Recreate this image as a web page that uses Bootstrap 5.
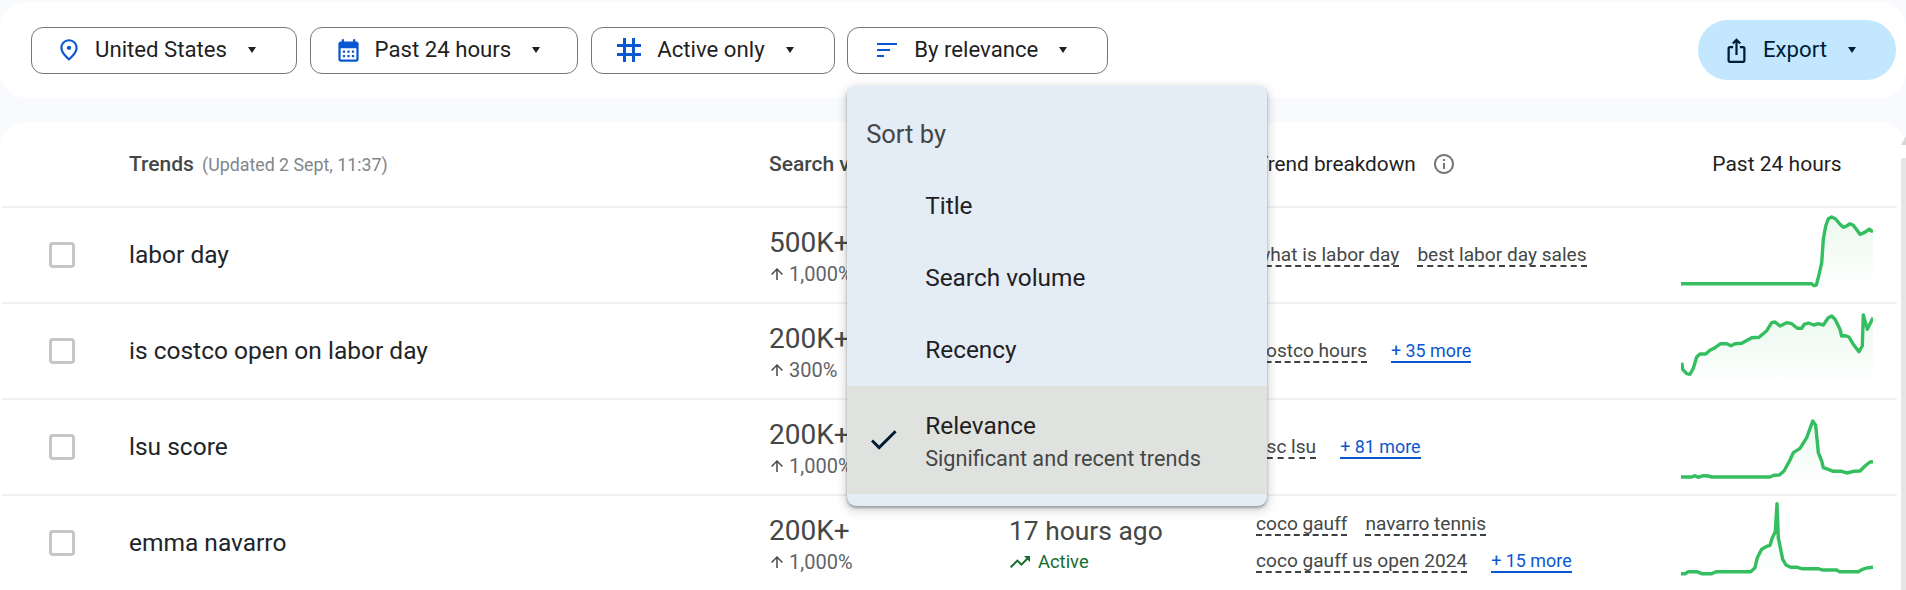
<!DOCTYPE html>
<html lang="en">
<head>
    <meta charset="UTF-8">
    <meta name="viewport" content="width=device-width, initial-scale=1.0">
    <title>Trending now</title>
    <link href="https://cdn.jsdelivr.net/npm/bootstrap@5.3.0/dist/css/bootstrap.min.css" rel="stylesheet">
    <style>
        body { background: #f8fafd; font-family: Roboto, "Liberation Sans", sans-serif; overflow: hidden; height: 590px; padding-top: 2px; color: #444746; }
        .filter-panel { background: #fff; height: 96px; border-radius: 26px; padding: 0 10px 0 31px; gap: 12.5px; margin-bottom: 24px; }
        .chip { height: 47px; border: 1px solid #747775; border-radius: 12px; background: #fff; color: #1f1f1f; font-size: 22.2px; font-weight: 400; padding: 0 40px 0 24px; gap: 13px; }
        .chip:hover, .chip:active, .chip.show { background: #fff !important; color: #1f1f1f !important; border-color: #747775 !important; }
        .chip::after { border-top: 6px solid; border-left: 4px solid transparent; border-right: 4px solid transparent; border-bottom: 0; margin-left: 8px; vertical-align: middle; }
        .chip svg { fill: #0b57d0; flex: none; }
        .chip-date { padding-right: 37px; }
        .ico-hash { margin: 0 -3px 0 -4.5px; }
        .ico-sort { margin: 0 4px 0 5px; }
        .chip-export, .chip-export:hover, .chip-export:active { height: 60px; border: 0; border-radius: 30px; background: #c2e7ff !important; color: #001d35 !important; padding: 0 40px 0 25px; }
        .chip-export svg { fill: #001d35; }
        .sort-menu { background: #e4ecf6; width: 420px; border: 0; border-radius: 9px; padding: 12px 0; margin: 0; top: 59px; left: 0; box-shadow: 0 2px 3px rgba(60,64,67,.45), 0 3px 9px 3px rgba(60,64,67,.16); }
        .sort-menu .dropdown-header { height: 72px; padding: 2px 0 0 19px; display: flex; align-items: center; font-size: 25.5px; font-weight: 400; color: #444746; }
        .sort-menu .dropdown-item { height: 72px; padding: 2px 0 0 78px; display: flex; flex-direction: column; justify-content: center; font-size: 24.4px; color: #1f1f1f; position: relative; }
        .sort-menu .dropdown-item.sort-active { height: 108px; background: #e0e2df; color: #1f1f1f; }
        .sort-menu .sort-sub { font-size: 21.7px; color: #444746; margin-top: 0; line-height: 28px; }
        .sort-menu .sort-tick { position: absolute; left: 19px; top: 36px; fill: #001d35; }
        .trends-panel { background: #fff; border-radius: 26px 26px 0 0; padding: 0 9px 0 2px; position: relative; height: 468px; }
        .trends-table { table-layout: fixed; width: 1895px; margin: 0; }
        .trends-table > :not(caption) > * > * { padding: 0; border-bottom: 2px solid #f0f1f1; vertical-align: middle; background: transparent; color: inherit; box-shadow: none; }
        .trends-table thead th { height: 85px; padding-top: 2px; font-size: 21px; font-weight: 500; color: #444746; white-space: nowrap; }
        .trends-table thead th.head-plain { font-weight: 400; color: #1f1f1f; font-size: 20.8px; }
        .trends-table thead th .head-range { font-size: 21px; width: 192px; }
        .trends-table tbody td { height: 96px; }
        .trends-table tbody td.vol-cell { padding-top: 2px; }
        .updated { font-size: 17.8px; font-weight: 400; color: #80868b; margin-left: 3px; }
        .info-ico { fill: #757575; margin-left: 11px; vertical-align: -5px; }
        .row-check { width: 26px; height: 26px; margin: 0 0 0 47px; border: 3px solid #c4c7c5; border-radius: 3px; float: none; display: block; }
        .trend-title { font-size: 24.5px; color: #444746; }
        .vol-num, .age-num { font-size: 28px; line-height: 34px; color: #444746; }
        .age-num { font-size: 26.4px; }
        .vol-sub { font-size: 20px; color: #5f6368; line-height: 26px; margin-top: 1px; display: flex; align-items: center; gap: 3px; }
        .vol-sub svg { fill: #444746; margin-left: -1px; }
        .age-sub { font-size: 18.4px; color: #146c2e; line-height: 26px; margin-top: 1px; display: flex; align-items: center; gap: 6px; }
        .age-sub svg { fill: #146c2e; margin-left: -1px; }
        .terms { column-gap: 18px; row-gap: 14px; font-size: 19.1px; line-height: 21px; }
        .term { color: #444746; border-bottom: 2px dashed #3c4043; white-space: nowrap; }
        .term-more { color: #0b57d0; border-bottom: 2px solid #0b57d0; margin-left: 6px; font-size: 17.9px; white-space: nowrap; text-decoration: none; }
        .spark { display: block; width: 192px; height: 94px; }
        .spark polyline { fill: none; stroke: #35be5f; stroke-width: 3.4; stroke-linejoin: round; stroke-linecap: butt; }
        .scroll-arrow { position: absolute; right: 0; top: 14px; width: 0; height: 0; border-left: 5px solid transparent; border-bottom: 9px solid #d8d8d8; }
        .scroll-track { position: absolute; right: 0; top: 36px; bottom: 0; width: 5px; background: #e6e6e6; }
    </style>
</head>
<body>
    <div class="filter-panel d-flex align-items-center">
        <button type="button" class="btn chip dropdown-toggle d-inline-flex align-items-center">
            <svg width="26" height="26" viewBox="0 0 24 24"><path d="M12 12c-1.1 0-2-.9-2-2s.9-2 2-2 2 .9 2 2-.9 2-2 2zm6-1.8C18 6.57 15.35 4 12 4s-6 2.57-6 6.2c0 2.34 1.95 5.44 6 9.14 4.05-3.7 6-6.8 6-9.14zM12 2c4.2 0 8 3.22 8 8.2 0 3.32-2.67 7.25-8 11.8-5.33-4.55-8-8.48-8-11.8C4 5.22 7.8 2 12 2z"/></svg>
            United States
        </button>
        <button type="button" class="btn chip chip-date dropdown-toggle d-inline-flex align-items-center">
            <svg width="27" height="27" viewBox="0 0 24 24"><path d="M19 4h-1V2h-2v2H8V2H6v2H5c-1.1 0-2 .9-2 2v14c0 1.1.9 2 2 2h14c1.1 0 2-.9 2-2V6c0-1.1-.9-2-2-2zm0 16H5V10h14v10zM9 14H7v-2h2v2zm4 0h-2v-2h2v2zm4 0h-2v-2h2v2zm-8 4H7v-2h2v2zm4 0h-2v-2h2v2zm4 0h-2v-2h2v2z"/></svg>
            Past 24 hours
        </button>
        <button type="button" class="btn chip dropdown-toggle d-inline-flex align-items-center">
            <svg class="ico-hash" width="36" height="36" viewBox="0 0 24 24"><path d="M20 10V8h-4V4h-2v4h-4V4H8v4H4v2h4v4H4v2h4v4h2v-4h4v4h2v-4h4v-2h-4v-4h4zm-6 4h-4v-4h4v4z"/></svg>
            Active only
        </button>
        <div class="dropdown">
            <button type="button" class="btn chip dropdown-toggle d-inline-flex align-items-center show">
                <svg class="ico-sort" width="20" height="14" viewBox="0 0 20 14"><rect width="20" height="2"/><rect y="6" width="13" height="2"/><rect y="12" width="7" height="2"/></svg>
                By relevance
            </button>
            <div class="dropdown-menu show sort-menu">
                <div class="dropdown-header">Sort by</div>
                <a class="dropdown-item" href="#">Title</a>
                <a class="dropdown-item" href="#">Search volume</a>
                <a class="dropdown-item" href="#">Recency</a>
                <a class="dropdown-item sort-active" href="#">
                    <svg class="sort-tick" width="35" height="35" viewBox="0 0 24 24"><path d="M9 16.17 4.83 12l-1.42 1.41L9 19 21 7l-1.41-1.41z"/></svg>
                    <span>Relevance</span>
                    <span class="sort-sub">Significant and recent trends</span>
                </a>
            </div>
        </div>
        <button type="button" class="btn chip chip-export dropdown-toggle d-inline-flex align-items-center ms-auto">
            <svg width="27" height="27" viewBox="0 0 24 24"><path d="M16 5l-1.42 1.42-1.59-1.59V16h-1.98V4.83L9.42 6.42 8 5l4-4 4 4zm4 5v11c0 1.1-.9 2-2 2H6c-1.11 0-2-.9-2-2V10c0-1.11.89-2 2-2h3v2H6v11h12V10h-3V8h3c1.1 0 2 .89 2 2z"/></svg>
            Export
        </button>
    </div>

    <div class="trends-panel">
        <table class="table trends-table">
            <colgroup>
                <col style="width:127px"><col style="width:640px"><col style="width:240px"><col style="width:247px"><col style="width:425px"><col style="width:216px">
            </colgroup>
            <thead>
                <tr>
                    <th></th>
                    <th>Trends <span class="updated">(Updated 2 Sept, 11:37)</span></th>
                    <th>Search volume</th>
                    <th></th>
                    <th class="head-plain">Trend breakdown
                        <svg class="info-ico" width="24" height="24" viewBox="0 0 24 24"><path d="M11 7h2v2h-2zm0 4h2v6h-2zm1-9C6.48 2 2 6.48 2 12s4.48 10 10 10 10-4.48 10-10S17.52 2 12 2zm0 18c-4.41 0-8-3.59-8-8s3.59-8 8-8 8 3.59 8 8-3.59 8-8 8z"/></svg>
                    </th>
                    <th class="head-plain"><div class="head-range text-center">Past 24 hours</div></th>
                </tr>
            </thead>
            <tbody>
                <tr>
                    <td><input class="form-check-input row-check" type="checkbox" aria-label="Select"></td>
                    <td class="trend-title">labor day</td>
                    <td class="vol-cell">
                        <div class="vol-num">500K+</div>
                        <div class="vol-sub"><svg width="18" height="18" viewBox="0 0 24 24"><path d="M4 12l1.41 1.41L11 7.83V20h2V7.83l5.58 5.59L20 12l-8-8z"/></svg>1,000%</div>
                    </td>
                    <td></td>
                    <td><div class="terms d-flex flex-wrap"><span class="term">what is labor day</span><span class="term">best labor day sales</span></div></td>
                    <td><svg class="spark" viewBox="0 1 192 94" data-line="0,76.7 130.7,76.7 133,78.7 135.3,78 137.7,69 140.7,55.7 142.3,32.3 144.7,19 147.3,11.7 150.7,10 154.7,12 159,17.3 162.3,20.3 165.7,19 169,16.7 172.3,18.3 175.7,22.7 179,27.3 183,25.7 188.3,22.3 192,24.7"></svg></td>
                </tr>
                <tr>
                    <td><input class="form-check-input row-check" type="checkbox" aria-label="Select"></td>
                    <td class="trend-title">is costco open on labor day</td>
                    <td class="vol-cell">
                        <div class="vol-num">200K+</div>
                        <div class="vol-sub"><svg width="18" height="18" viewBox="0 0 24 24"><path d="M4 12l1.41 1.41L11 7.83V20h2V7.83l5.58 5.59L20 12l-8-8z"/></svg>300%</div>
                    </td>
                    <td></td>
                    <td><div class="terms d-flex flex-wrap"><span class="term">costco hours</span><a class="term-more" href="#">+ 35 more</a></div></td>
                    <td><svg class="spark" viewBox="0 1 192 94" data-line="0.7,59.7 1.7,66.3 5.7,70.7 9,71.3 12.3,65.3 15.7,54 19,51 24.7,51 29,47.3 34,44.7 39.7,40.7 45.7,40.7 50,42.7 54,40.7 60.7,40.3 70.7,34.7 78,34.3 85.7,27.7 90.7,19.7 94,19 99,23 105.7,19.7 110.7,20.7 116.3,25.3 120.7,25.3 123.3,21.3 127.3,20 133,22 137.3,20.7 142.3,22 147.3,14.7 150.7,13 154,16.3 159,26.3 160.7,33 164,32.7 168,34 172.3,41.3 178,48.7 181.3,43 182.3,12 186.3,26.3 192,14.7"></svg></td>
                </tr>
                <tr>
                    <td><input class="form-check-input row-check" type="checkbox" aria-label="Select"></td>
                    <td class="trend-title">lsu score</td>
                    <td class="vol-cell">
                        <div class="vol-num">200K+</div>
                        <div class="vol-sub"><svg width="18" height="18" viewBox="0 0 24 24"><path d="M4 12l1.41 1.41L11 7.83V20h2V7.83l5.58 5.59L20 12l-8-8z"/></svg>1,000%</div>
                    </td>
                    <td></td>
                    <td><div class="terms d-flex flex-wrap"><span class="term">usc lsu</span><a class="term-more" href="#">+ 81 more</a></div></td>
                    <td><svg class="spark" viewBox="0 1 192 94" data-line="0,78 10.7,78 14,76.7 17.3,78.3 22.3,76.7 27.3,77 30.7,78 89,78 93,76.3 98.3,76 103,72 109,61 112.3,53.7 119,49.3 125.7,38.7 131.7,22 134.7,26.3 137.3,53.7 140.7,62 142.3,68.7 147.3,70.3 152.3,72.3 160.7,72.3 166.3,74 172.3,72.3 179,72 184,67 189,63 192,62.7"></svg></td>
                </tr>
                <tr>
                    <td><input class="form-check-input row-check" type="checkbox" aria-label="Select"></td>
                    <td class="trend-title">emma navarro</td>
                    <td class="vol-cell">
                        <div class="vol-num">200K+</div>
                        <div class="vol-sub"><svg width="18" height="18" viewBox="0 0 24 24"><path d="M4 12l1.41 1.41L11 7.83V20h2V7.83l5.58 5.59L20 12l-8-8z"/></svg>1,000%</div>
                    </td>
                    <td class="vol-cell">
                        <div class="age-num">17 hours ago</div>
                        <div class="age-sub"><svg width="24" height="24" viewBox="0 0 24 24"><path d="M16 6l2.29 2.29-4.88 4.88-4-4L2 16.59 3.41 18l6-6 4 4 6.3-6.29L22 12V6z"/></svg>Active</div>
                    </td>
                    <td><div class="terms d-flex flex-wrap"><span class="term">coco gauff</span><span class="term">navarro tennis</span><span class="term">coco gauff us open 2024</span><a class="term-more" href="#">+ 15 more</a></div></td>
                    <td><svg class="spark" viewBox="0 1 192 94" data-line="0,78.7 4,78.7 7.3,76.7 15.7,76.7 20.7,78.7 30.7,78.7 35,76.7 69.7,76.7 74,72.7 76.3,62.7 80.7,54.3 85,51.7 89,50.3 91.3,42.7 94.3,36.7 96,8.7 97.3,42.7 101.7,64.3 105,70 109.7,72.3 116.3,72.3 120.7,73.7 137.3,73.7 141.3,75 155.7,75 158.3,76.7 177.3,76.7 180.7,74.7 185.7,73 192,72.3"></svg></td>
                </tr>
            </tbody>
        </table>
        <div class="scroll-arrow"></div>
        <div class="scroll-track"></div>
    </div>

    <script>
        // sparklines: green line with a faded area under it
        document.querySelectorAll('.spark').forEach((svg, i) => {
            const pts = svg.dataset.line;
            const first = pts.split(' ')[0].split(',')[0];
            const id = 'fade' + i;
            svg.innerHTML =
                `<defs><linearGradient id="${id}" x1="0" y1="0" x2="0" y2="1"><stop offset="0" stop-color="#35be5f" stop-opacity=".1"/><stop offset="1" stop-color="#35be5f" stop-opacity="0"/></linearGradient></defs>` +
                `<polygon points="${first},84 ${pts} 192,84" fill="url(#${id})"/>` +
                `<polyline points="${pts}"/>`;
        });
    </script>
    <script src="https://cdn.jsdelivr.net/npm/bootstrap@5.3.0/dist/js/bootstrap.bundle.min.js"></script>
</body>
</html>
